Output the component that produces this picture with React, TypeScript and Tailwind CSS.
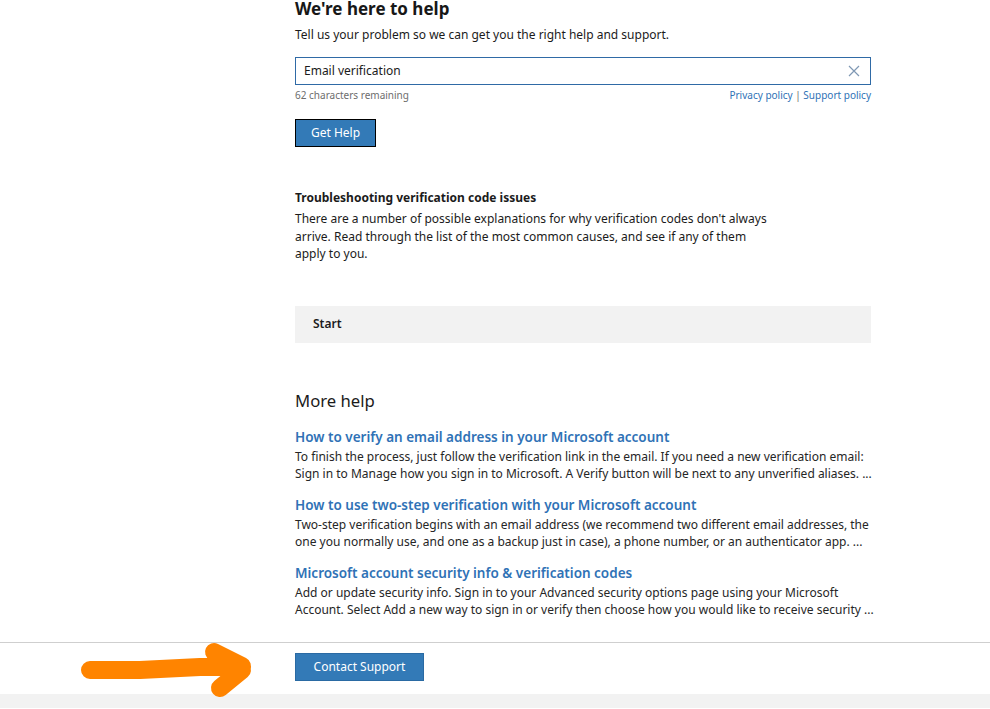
import React from 'react';

interface HelpLink {
  title: string;
  text: string;
}

const links: HelpLink[] = [
  {
    title: 'How to verify an email address in your Microsoft account',
    text: 'To finish the process, just follow the verification link in the email. If you need a new verification email: Sign in to Manage how you sign in to Microsoft. A Verify button will be next to any unverified aliases. ...',
  },
  {
    title: 'How to use two-step verification with your Microsoft account',
    text: 'Two-step verification begins with an email address (we recommend two different email addresses, the one you normally use, and one as a backup just in case), a phone number, or an authenticator app. ...',
  },
  {
    title: 'Microsoft account security info & verification codes',
    text: 'Add or update security info. Sign in to your Advanced security options page using your Microsoft Account. Select Add a new way to sign in or verify then choose how you would like to receive security ...',
  },
];

const App: React.FC = () => {
  return (
    <div className="relative w-[990px] h-[709px] overflow-hidden bg-white text-[#1b1b1b] font-['Noto_Sans',sans-serif]">
      {/* Main column */}
      <div className="ml-[295px] w-[576px] flex flex-col">
        <h1 className="-mt-[3px] text-[17px] leading-[24px] font-bold text-[#171717]">We're here to help</h1>
        <p className="mt-[4px] text-[12px] leading-[20px]">Tell us your problem so we can get you the right help and support.</p>

        <div className="mt-[12px] h-[28px] border border-[#2f6aa6] flex items-center pl-[8px] pr-[10px]">
          <span className="flex-1 text-[12px]">Email verification</span>
          <svg width="12" height="12" viewBox="0 0 12 12">
            <path d="M1 1 L11 11 M11 1 L1 11" stroke="#7f98b4" strokeWidth="1.2" fill="none" />
          </svg>
        </div>
        <div className="mt-[2px] flex justify-between text-[10px] leading-[16px]">
          <span className="text-[#6d6d6d]">62 characters remaining</span>
          <span className="text-[#2f72b6]">
            Privacy policy <span className="text-[#6d6d6d]">|</span> Support policy
          </span>
        </div>

        <button className="mt-[16px] self-start h-[28px] px-[15px] bg-[#337ab7] border border-black text-white text-[12px]">
          Get Help
        </button>

        <h2 className="mt-[41px] text-[12px] leading-[20px] font-bold">Troubleshooting verification code issues</h2>
        <p className="mt-[2px] w-[480px] text-[12px] leading-[17.5px]">
          There are a number of possible explanations for why verification codes don't always arrive. Read through the list of the most common causes, and see if any of them apply to you.
        </p>

        <div className="mt-[43px] h-[37px] bg-[#f2f2f2] flex items-center px-[18px] text-[12px] font-semibold">
          Start
        </div>

        <h2 className="mt-[46px] text-[16.7px] leading-[24px]">More help</h2>
        <div className="mt-[14px] flex flex-col gap-[13px]">
          {links.map((l) => (
            <div key={l.title}>
              <div className="text-[13.5px] leading-[20px] font-semibold text-[#2f72b6]">{l.title}</div>
              <p className="mt-[1px] w-[586px] text-[12px] leading-[17px] text-[#262626]">{l.text}</p>
            </div>
          ))}
        </div>
      </div>

      {/* Footer */}
      <div className="absolute left-0 right-0 top-[642px] border-t border-[#cfcfcf]">
        <div className="ml-[295px] mt-[10px] h-[28px] w-[129px] bg-[#337ab7] border border-[#2a6aa3] flex items-center justify-center text-white text-[12px]">
          Contact Support
        </div>
        <div className="mt-[13px] h-[14px] bg-[#f2f2f2]" />
      </div>

      {/* Orange annotation arrow */}
      <svg className="absolute left-0 top-0 pointer-events-none" width="990" height="709" viewBox="0 0 990 709">
        <g stroke="#ff8400" strokeWidth="18" strokeLinecap="round" strokeLinejoin="round" fill="none">
          <path d="M90 670 L140 670 L200 667 L240 667" />
          <path d="M214 652 L242 666" />
          <path d="M220 688 L242 670" />
        </g>
      </svg>
    </div>
  );
};

export default App;
